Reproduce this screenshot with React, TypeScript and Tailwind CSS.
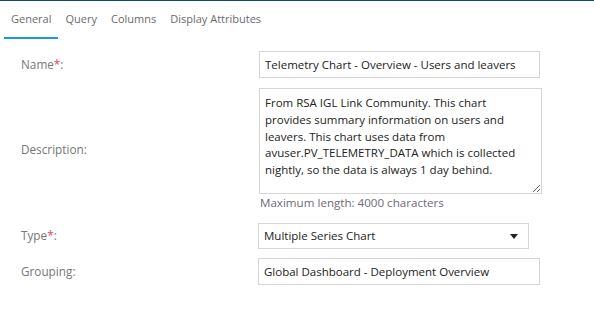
import { ChangeEvent, useState } from 'react';

const tabs = ['General', 'Query', 'Columns', 'Display Attributes'];

function Label({ text, required, w = 'w-[259px]' }: { text: string; required?: boolean; w?: string }) {
  return (
    <div className={`${w} shrink-0 pl-[21px] text-[11.75px] text-[#777]`}>
      {text}
      {required && <span className="text-[#e0474c]">*</span>}:
    </div>
  );
}

export default function App() {
  const [active, setActive] = useState('General');
  const [name, setName] = useState('Telemetry Chart - Overview - Users and leavers');
  const [desc, setDesc] = useState(
    'From RSA IGL Link Community. This chart provides summary information on users and leavers. This chart uses data from avuser.PV_TELEMETRY_DATA which is collected nightly, so the data is always 1 day behind.'
  );
  const [grouping, setGrouping] = useState('Global Dashboard - Deployment Overview');

  return (
    <div className="w-[594px] h-[310px] bg-white border-t border-[#0b4a7d] font-['Open_Sans',sans-serif] text-[#222]">
      {/* tab bar */}
      <div className="flex h-[38px] pl-[4px]">
        {tabs.map((t) => (
          <button
            key={t}
            onClick={() => setActive(t)}
            className={`px-[7px] pt-[1px] text-[11px] text-[#6b6b6b] border-b-2 ${
              active === t ? 'border-[#1d9ad6]' : 'border-transparent'
            }`}
          >
            {t}
          </button>
        ))}
      </div>

      <div className="mt-[12px] flex flex-col">
        <div className="flex items-center">
          <Label text="Name" required />
          <input
            value={name}
            onChange={(e: ChangeEvent<HTMLInputElement>) => setName(e.target.value)}
            className="w-[281px] h-[27px] border border-[#d6d6d6] px-[5px] text-[11.5px] outline-none"
          />
        </div>

        <div className="mt-[10px] flex items-center">
          <Label text="Description" />
          <div className="flex flex-col">
            <textarea
              value={desc}
              onChange={(e: ChangeEvent<HTMLTextAreaElement>) => setDesc(e.target.value)}
              className="w-[283px] h-[106px] border border-[#d6d6d6] pl-[5px] pr-[16px] pt-[6px] text-[11.5px] leading-[16.75px] outline-none resize-y"
            />
            <div className="mt-[1px] pl-[1px] text-[11.6px] leading-[16px] text-[#6e6a7a]">
              Maximum length: 4000 characters
            </div>
          </div>
        </div>

        <div className="mt-[12px] flex items-center">
          <Label text="Type" required w="w-[258px]" />
          <div className="relative w-[271px] h-[26px] border border-[#d6d6d6] flex items-center px-[5px] text-[11.5px]">
            Multiple Series Chart
            <svg className="absolute right-[10px] top-[10px]" width="8" height="5" viewBox="0 0 8 5">
              <path d="M0 0h8L4 5z" fill="#222" />
            </svg>
          </div>
        </div>

        <div className="mt-[9px] flex items-center">
          <Label text="Grouping" w="w-[258px]" />
          <input
            value={grouping}
            onChange={(e: ChangeEvent<HTMLInputElement>) => setGrouping(e.target.value)}
            className="w-[282px] h-[27px] border border-[#d6d6d6] px-[5px] text-[11.5px] outline-none"
          />
        </div>
      </div>
    </div>
  );
}
